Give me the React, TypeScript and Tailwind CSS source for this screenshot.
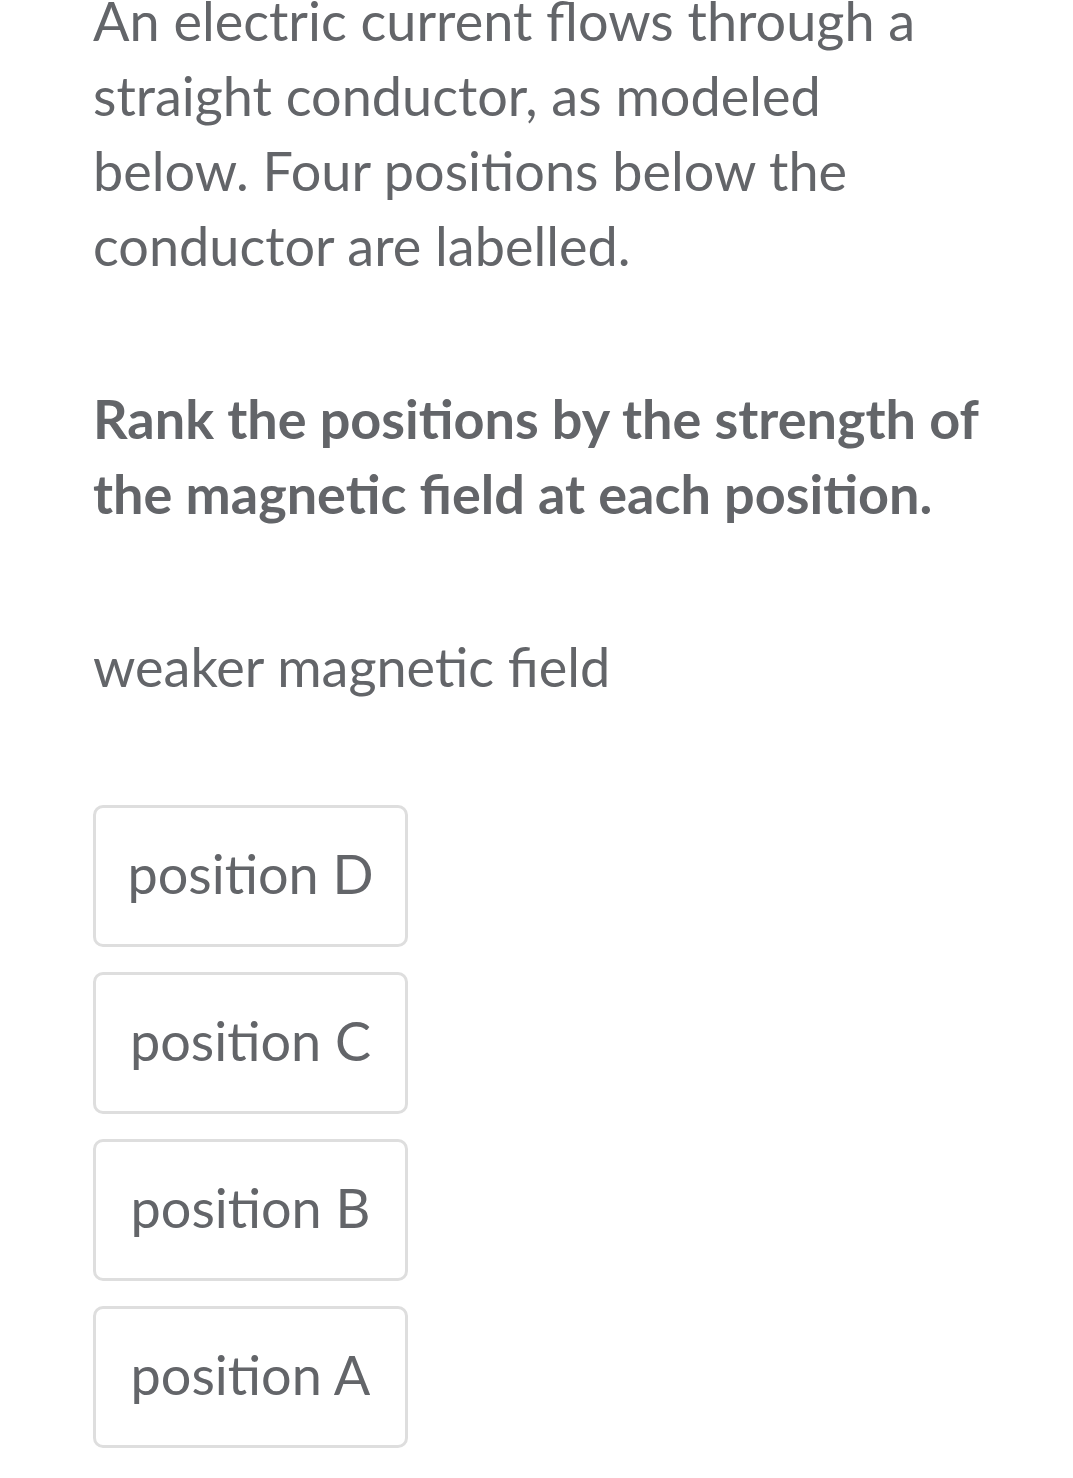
import React from 'react'

const RankingQuestion = () => {
  const items = ['position D', 'position C', 'position B', 'position A']

  return (
    <div className="min-h-screen bg-white text-[#636569] font-['Lato','Liberation_Sans',sans-serif]">
      <div className="pl-[93px] pr-[60px] mt-[-17px] text-[54px] leading-[75px]">
        <p>
          An electric current flows through a<br />
          straight conductor, as modeled<br />
          below. Four positions below the<br />
          conductor are labelled.
        </p>

        <p className="mt-[98px] font-bold">
          Rank the positions by the strength of<br />
          the magnetic field at each position.
        </p>

        <p className="mt-[98px]">weaker magnetic field</p>

        <ul className="mt-[101px] flex flex-col gap-[25px]">
          {items.map(item => (
            <li
              key={item}
              className="w-[315px] h-[142px] pb-[6px] flex items-center justify-center border-[3px] border-[#dedede] rounded-[10px] bg-white"
            >
              {item}
            </li>
          ))}
        </ul>
      </div>
    </div>
  )
}

export default function App() {
  return <RankingQuestion />
}
